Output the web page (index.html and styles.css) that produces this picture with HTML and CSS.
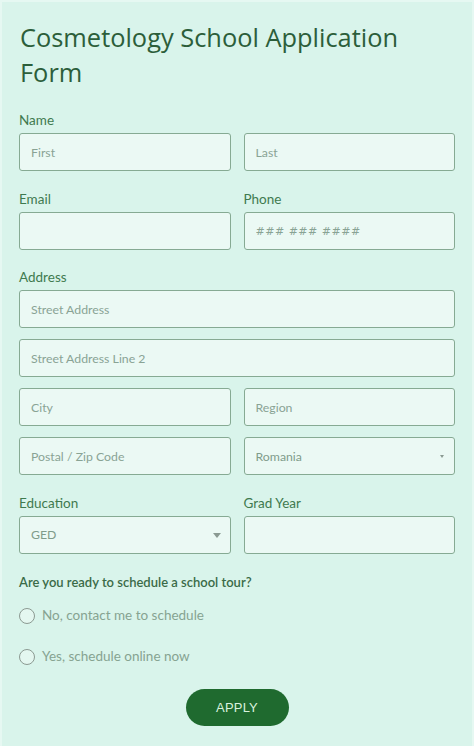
FILE: index.html
```html
<!DOCTYPE html>
<html lang="en">
<head>
    <meta charset="UTF-8" />
    <meta name="viewport" content="width=device-width, initial-scale=1" />
    <title>Cosmetology School Application Form</title>
    <link rel="stylesheet" href="styles.css">
</head>
<body>

<div class="page">
    <h1>Cosmetology School Application Form</h1>

    <form class="form">
        <div class="field">
            <label>Name</label>
            <div class="row">
                <input type="text" placeholder="First" />
                <input type="text" placeholder="Last" />
            </div>
        </div>

        <div class="row">
            <div class="field">
                <label for="email">Email</label>
                <input id="email" type="email" />
            </div>
            <div class="field">
                <label for="phone">Phone</label>
                <input id="phone" type="tel" class="mono" placeholder="### ### ####" />
            </div>
        </div>

        <div class="field">
            <label>Address</label>
            <div class="stack">
                <input type="text" placeholder="Street Address" />
                <input type="text" placeholder="Street Address Line 2" />
                <div class="row">
                    <input type="text" placeholder="City" />
                    <input type="text" placeholder="Region" />
                </div>
                <div class="row">
                    <input type="text" placeholder="Postal / Zip Code" />
                    <div class="select-wrap small">
                        <select>
                            <option>Romania</option>
                        </select>
                    </div>
                </div>
            </div>
        </div>

        <div class="row">
            <div class="field">
                <label for="education">Education</label>
                <div class="select-wrap">
                    <select id="education">
                        <option>GED</option>
                    </select>
                </div>
            </div>
            <div class="field">
                <label for="grad">Grad Year</label>
                <input id="grad" type="text" />
            </div>
        </div>

        <div class="field">
            <p class="question">Are you ready to schedule a school tour?</p>
            <div class="radios">
                <label class="radio"><span class="circle"></span>No, contact me to schedule</label>
                <label class="radio"><span class="circle"></span>Yes, schedule online now</label>
            </div>
        </div>

        <div class="actions">
            <button type="button" class="apply">APPLY</button>
        </div>
    </form>
</div>

</body>
</html>
```

FILE: styles.css
```css
* {
    box-sizing: border-box;
    margin: 0;
    padding: 0;
}
html {
    background: #e6f8f2;
}
body {
    margin: 0;
    font-family: 'Lato', 'Noto Sans', sans-serif;
    min-height: 100vh;
}
.page {
    background: #d9f4eb;
    margin: 2px;
    min-height: calc(100vh - 4px);
    padding: 18px 17px 20px;
}
h1 {
    font-family: 'Open Sans', sans-serif;
    font-weight: 400;
    font-size: 25.4px;
    line-height: 35px;
    color: #2c5e3a;
    margin-bottom: 21px;
    margin-left: 1px;
}
.form {
    display: flex;
    flex-direction: column;
    gap: 18.5px;
}
.field {
    display: flex;
    flex-direction: column;
}
.field > label,
.question {
    font-size: 13.5px;
    line-height: 18px;
    color: #3f7a4f;
    margin-bottom: 4px;
}
.question {
    color: #3b6b48;
    font-weight: 600;
    font-size: 13px;
    margin-top: 1px;
}
.row {
    display: grid;
    grid-template-columns: 1fr 1fr;
    column-gap: 13px;
}
.stack {
    display: flex;
    flex-direction: column;
    gap: 11px;
}
input,
select {
    width: 100%;
    height: 38px;
    padding: 0 11px;
    border: 1.5px solid #86aa93;
    border-radius: 3px;
    background: #ebf9f4;
    font-family: 'Lato', 'Noto Sans', sans-serif;
    font-size: 12.3px;
    color: #7f9c8b;
    outline: none;
}
input::placeholder {
    color: #89a394;
}
input.mono::placeholder {
    font-family: 'DejaVu Sans', sans-serif;
    font-style: italic;
    font-size: 11px;
    letter-spacing: 0.5px;
}
select {
    appearance: none;
    -webkit-appearance: none;
}
.select-wrap {
    position: relative;
}
.select-wrap::after {
    content: "";
    position: absolute;
    right: 10px;
    top: 17px;
    border-left: 4px solid transparent;
    border-right: 4px solid transparent;
    border-top: 5px solid #8a9a92;
}
.select-wrap.small::after {
    right: 11px;
    border-left-width: 2.5px;
    border-right-width: 2.5px;
    border-top-width: 3px;
    top: 18px;
}
.radios {
    display: flex;
    flex-direction: column;
    gap: 20px;
    margin-top: 10px;
}
.radio {
    display: flex;
    align-items: center;
    gap: 7px;
    font-size: 13.5px;
    line-height: 21px;
    color: #86a391;
}
.circle {
    width: 16px;
    height: 16px;
    border: 1.3px solid #8c9a92;
    border-radius: 50%;
    background: #e4f7f0;
}
.actions {
    display: flex;
    justify-content: center;
    margin-top: 3px;
}
.apply {
    width: 103px;
    height: 37px;
    border: none;
    border-radius: 19px;
    background: #1f6a2f;
    color: #d8f1de;
    font-family: 'Liberation Sans', Arial, sans-serif;
    font-size: 13px;
    letter-spacing: 0.2px;
    cursor: pointer;
}
```
